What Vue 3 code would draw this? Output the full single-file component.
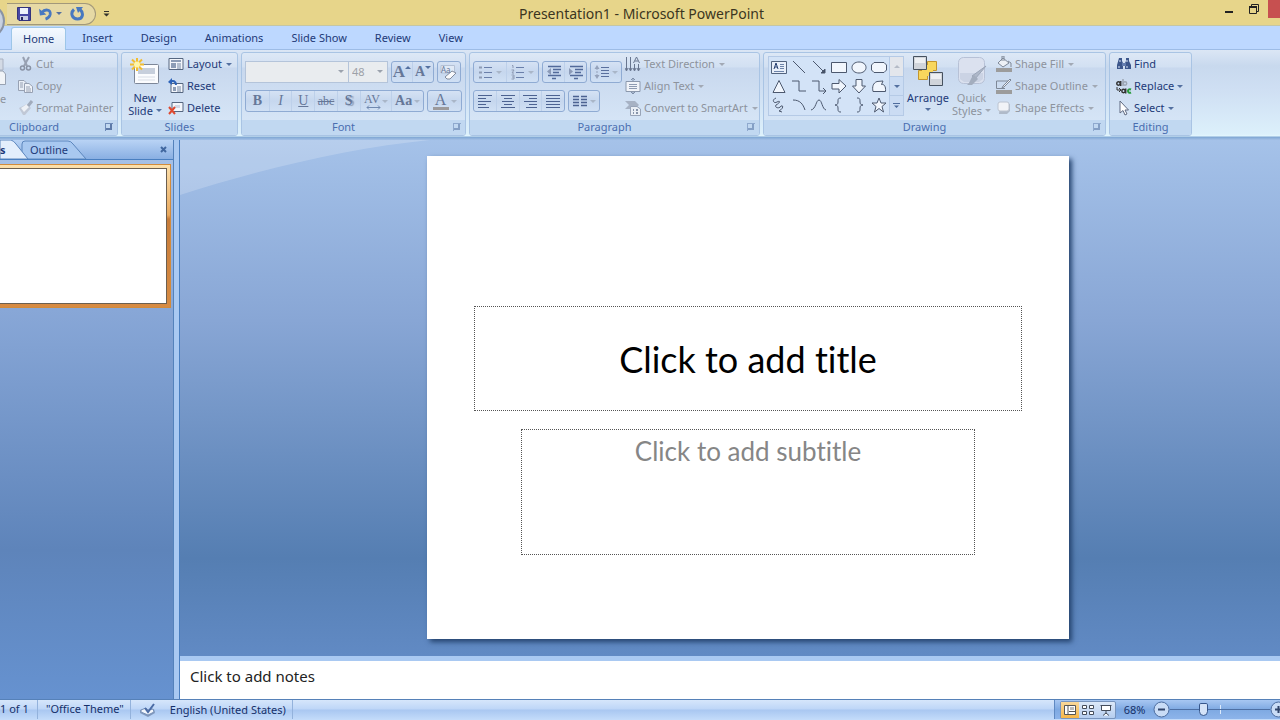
<script setup>
import { ref } from 'vue'

const tabs = ['Home', 'Insert', 'Design', 'Animations', 'Slide Show', 'Review', 'View']
const activeTab = ref('Home')
const zoom = ref(32)

const shapes = [
  { name: 'Line', d: 'M2 2L14 14' },
  { name: 'Arrow', d: 'M2 2L14 14M14 10V14H10Z', solid: true },
  { name: 'Rectangle', d: 'M.5 3.5H15.5V13.5H.5Z', fill: true },
  { name: 'Oval', d: 'M8 3C12 3 15 5.2 15 8.5S12 14 8 14S1 11.8 1 8.5S4 3 8 3Z', fill: true },
  { name: 'Rounded rectangle', d: 'M3 3.5H13L15.500 6V11L13 13.500H3L.5 11V6Z', fill: true },
  { name: 'Triangle', d: 'M8 2.500L14 14.500H2Z', fill: true },
  { name: 'Elbow connector', d: 'M1 3H8V13H15' },
  { name: 'Elbow arrow connector', d: 'M1 3H8V13H15M12 10L15 13L12 16', },
  { name: 'Right arrow', d: 'M1 5.500H8V1.500L15 8L8 15V11H1Z', fill: true },
  { name: 'Down arrow', d: 'M5 1.500H11V8H14.500L8 15L1.500 8H5Z', fill: true },
  { name: 'Freeform', d: 'M2 13.500C1 9 2 5 6 3.500L12 3L10.500 6.500C13 6 15 8 14.500 13.500Z', fill: true },
  { name: 'Scribble', d: 'M5 1C0 3 3 7 6 5C10 3 9 6 5 8C3 11 9 12 10 9C13 8 12 12 8 14L11 15' },
  { name: 'Arc', d: 'M2 3C9 3 12 7 14 13' },
  { name: 'Curve', d: 'M0 13C5 12 5 3 8 3S11 12 15 13' },
  { name: 'Left brace', d: 'M10 1C7 1 7 2 7 5C7 7 6 8 4 8C6 8 7 9 7 11C7 14 7 15 10 15' },
  { name: 'Right brace', d: 'M6 1C9 1 9 2 9 5C9 7 10 8 12 8C10 8 9 9 9 11C9 14 9 15 6 15' },
  { name: 'Star', d: 'M8 1L10 6H15L11 9.500L12.500 15L8 11.500L3.500 15L5 9.500L1 6H6Z', fill: true },
]

const alignments = [
  { name: 'Align left', d: 'M1 2H15M1 5H9M1 8H14M1 11H9M1 14H12' },
  { name: 'Center', d: 'M1 2H15M4 5H12M2 8H14M4 11H12M1 14H15' },
  { name: 'Align right', d: 'M1 2H15M7 5H15M2 8H15M7 11H15M4 14H15' },
  { name: 'Justify', d: 'M1 2H15M1 5H15M1 8H15M1 11H15M1 14H15' },
]
</script>

<template>
  <div class="window">
    <header class="titlebar">
      <button class="orb" aria-label="Office menu"></button>
      <div class="quick">
        <div class="pill">
          <button aria-label="Save">
            <svg width="14" height="14" viewBox="0 0 14 14"><path d="M.5.5H13.500V13.500H2L.5 12Z" fill="#4747a5" stroke="#33337c" /><path d="M3 1H11V7H3Z" fill="#eef2fb" /><path d="M3 9H11V13H3Z" fill="#c9cde4" /><path d="M4 10H6V13H4Z" fill="#252560" /></svg>
          </button>
          <button class="undo" aria-label="Undo">
            <svg width="14" height="14" viewBox="0 0 15 15"><path d="M3 6C6 2 13 2 12 8C11.500 10 10 12 7 13" fill="none" stroke="#4878c0" stroke-width="3" /><path d="M0 2L1 9L8 8Z" fill="#4878c0" /></svg>
            <i class="caret"></i>
          </button>
          <button aria-label="Redo">
            <svg width="15" height="15" viewBox="0 0 15 15"><path d="M4 3.500C0 7 2 13 7.500 13S14 7 10 3.500" fill="none" stroke="#4878c0" stroke-width="3" /><path d="M6 1H13L8 7Z" fill="#4878c0" /></svg>
          </button>
        </div>
        <button class="custom" aria-label="Customize Quick Access Toolbar">
          <svg width="7" height="6" viewBox="0 0 7 6"><path d="M1 0H6V1H1ZM.5 2.500H6.500L3.500 5.500Z" fill="#33322c" /></svg>
        </button>
      </div>
      <h1>Presentation1 - Microsoft PowerPoint</h1>
      <div class="winbtns">
        <button aria-label="Minimize"><svg width="8" height="12" viewBox="0 0 8 12"><path d="M0 9H8V11H0Z" fill="#222" /></svg></button>
        <button aria-label="Restore"><svg width="10" height="10" viewBox="0 0 10 10"><path d="M.5 3H7.500V9.500H.5ZM2.500 2.500V.5H9.500V7.500H8" fill="none" stroke="#222" /><path d="M0 2H8V4H0Z" fill="#222" /></svg></button>
        <button class="close" aria-label="Close"></button>
      </div>
    </header>

    <nav class="tabs">
      <button v-for="t in tabs" :key="t" :class="{ active: t === activeTab }" @click="activeTab = t">{{ t }}</button>
    </nav>

    <div class="ribbon">
      <section class="group clipboard">
        <div class="body">
          <button class="paste off" aria-label="Paste">
            <svg width="6" height="28" viewBox="0 0 6 28"><path d="M0 1H3V12H0" fill="#d3dae5" stroke="#a9b2c2" /><path d="M0 13H3L5.500 16V26.500H0" fill="#f1f4f8" stroke="#98a2b2" /></svg>
            <span>e</span>
          </button>
          <div class="col">
            <button class="off"><svg width="16" height="16" viewBox="0 0 16 16"><path d="M5 1L9 10M11 1L6 10" stroke="#98a1b2" stroke-width="2" /><circle cx="4.500" cy="12" r="2" fill="none" stroke="#8992a4" stroke-width="1.500" /><circle cx="10.500" cy="12" r="2" fill="none" stroke="#8992a4" stroke-width="1.500" /></svg>Cut</button>
            <button class="off"><svg width="16" height="16" viewBox="0 0 16 16"><path d="M.5 2.500H6L8.500 5V12.500H.5Z" fill="#e9eef6" stroke="#97a1b3" /><path d="M6.500 5.500H11L14.500 8.500V14.500H6.500Z" fill="#f0f3f9" stroke="#97a1b3" /><path d="M2 5H5M2 7H5M2 9H5M8 9H12M8 11H13M8 13H13" stroke="#97a1b3" /></svg>Copy</button>
            <button class="off"><svg width="16" height="16" viewBox="0 0 16 16"><path d="M1 8L9 4L13 8L7 15L5 15Z" fill="#c0c8d6" /><path d="M3 8L9 4L11 7L6 12Z" fill="#eef1f6" /><path d="M10 6L14 1" stroke="#a1abbc" stroke-width="3" /></svg>Format Painter</button>
          </div>
        </div>
        <footer>Clipboard<button class="launch" aria-label="Clipboard options"></button></footer>
      </section>

      <section class="group slides">
        <div class="body">
          <button class="big newslide">
            <svg width="30" height="28" viewBox="0 0 30 28"><rect x="4.500" y="6.500" width="24" height="19" rx="1" fill="#fbfcfe" stroke="#7d8798" /><path d="M8 10H25V16H8Z" fill="#c7cfdc" /><path d="M8 19H25M8 22H25" stroke="#d8dde6" /><path d="M7 0V13M0 6.500H14M2 1.500L12 11.500M12 1.500L2 11.500" stroke="#f1bd31" stroke-width="2" /><circle cx="7" cy="6.500" r="3" fill="#fff5a7" /></svg>
            <span>New</span><span>Slide<i class="caret"></i></span>
          </button>
          <div class="col">
            <button><svg width="16" height="16" viewBox="0 0 16 16"><path d="M1 2.500H15V13.500H1Z" fill="#f3f6fb" stroke="#566780" /><path d="M3 4H13V6H3ZM3 7H8V12H3Z" fill="#8d9db6" /><path d="M9 8H13M9 10H13M9 12H13" stroke="#7488a4" /></svg>Layout<i class="caret"></i></button>
            <button><svg width="16" height="16" viewBox="0 0 16 16"><path d="M3 5.500H15V14.500H3Z" fill="#f3f6fb" stroke="#566780" /><path d="M5 9H8V13H5Z" fill="#8d9db6" /><path d="M9 9H13M9 11H13M9 13H13" stroke="#7488a4" /><path d="M2 4C5 2 8 3 8 7" stroke="#2c62b8" stroke-width="2" fill="none" /><path d="M0 4L4 0V7Z" fill="#2c62b8" /></svg>Reset</button>
            <button><svg width="16" height="16" viewBox="0 0 16 16"><path d="M4 2.500H15V11.500H4Z" fill="#f3f6fb" stroke="#566780" /><path d="M7 5H12V8H7Z" fill="#cfd8e6" /><path d="M1 7L7 14M7 7L1 14" stroke="#df4930" stroke-width="2" /></svg>Delete</button>
          </div>
        </div>
        <footer>Slides</footer>
      </section>

      <section class="group font">
        <div class="body rows">
          <div class="row">
            <div class="combo">
              <label class="family"><select aria-label="Font" disabled><option></option></select><i class="caret"></i></label>
              <label class="size"><select aria-label="Font size" disabled><option>48</option></select><i class="caret"></i></label>
            </div>
            <div class="set two">
              <button class="glyph grow" aria-label="Grow font">A<i class="up"></i></button>
              <button class="glyph shrink" aria-label="Shrink font">A<i class="caret"></i></button>
            </div>
            <div class="set one">
              <button class="clear" aria-label="Clear formatting"><span>Aa</span><svg width="18" height="18" viewBox="0 0 18 18"><path d="M1 2.500H14.500V10H1Z" fill="#eef3fa" fill-opacity=".6" stroke="#b4c1d5" /><path d="M5 14L12 8L16 10L10 16H7Z" fill="#f9fafc" stroke="#818b9d" /></svg></button>
            </div>
          </div>
          <div class="row">
            <div class="set styles">
              <button class="glyph"><b>B</b></button>
              <button class="glyph"><em>I</em></button>
              <button class="glyph"><u>U</u></button>
              <button class="glyph abc"><s>abc</s></button>
              <button class="glyph shadow"><b>S</b></button>
              <button class="glyph av" aria-label="Character spacing"><span>AV</span><svg width="15" height="5" viewBox="0 0 15 5"><path d="M1 2.500H14M3 .5L1 2.500L3 4.500M12 .5L14 2.500L12 4.500" fill="none" stroke="#7089b0" /></svg><i class="caret"></i></button>
              <button class="glyph aa">Aa<i class="caret"></i></button>
            </div>
            <div class="set color">
              <button class="glyph fc" aria-label="Font color"><span>A</span><i class="caret"></i></button>
            </div>
          </div>
        </div>
        <footer>Font<button class="launch off" aria-label="Font options"></button></footer>
      </section>

      <section class="group paragraph">
        <div class="body">
          <div class="rows">
            <div class="row">
              <div class="set lists">
                <button aria-label="Bullets"><svg width="16" height="16" viewBox="0 0 16 16"><path d="M6 3.500H14M6 8.500H14M6 13.500H14" stroke="#6a7faa" /><path d="M1 3.500H4M1 8.500H4M1 13.500H4" stroke="#8e9bb4" stroke-width="2" /></svg><i class="caret"></i></button>
                <button aria-label="Numbering"><svg width="16" height="16" viewBox="0 0 16 16"><path d="M6 3.500H14M6 8.500H14M6 13.500H14" stroke="#6a7faa" /><path d="M2 1.500H3V4M1.500 6H4L2 9H4M1.500 11H4V15H1.500M2 13H4" stroke="#8e9bb4" fill="none" /></svg><i class="caret"></i></button>
              </div>
              <div class="set indent">
                <button aria-label="Decrease indent"><svg width="16" height="16" viewBox="0 0 16 16"><path d="M2 2.500H15M7 5.500H15M7 8.500H13M2 11.500H15M6 14.500H10" stroke="#526a9a" stroke-width="1.500" /><path d="M5 4V11L1 7.500Z" fill="#8b9ab7" /></svg></button>
                <button aria-label="Increase indent"><svg width="16" height="16" viewBox="0 0 16 16"><path d="M2 2.500H15M7 5.500H15M7 8.500H13M2 11.500H15M6 14.500H10" stroke="#526a9a" stroke-width="1.500" /><path d="M1 4V11L5 7.500Z" fill="#8b9ab7" /></svg></button>
              </div>
              <div class="set spacing">
                <button aria-label="Line spacing"><svg width="16" height="16" viewBox="0 0 16 16"><path d="M7 3.500H15M7 6.500H15M7 9.500H15M7 12.500H15" stroke="#5a709e" /><path d="M3 1L5.500 5H.5ZM3 15L5.500 11H.5Z" fill="#95a2bb" /><path d="M3 4V12" stroke="#95a2bb" stroke-dasharray="2 1" /></svg><i class="caret"></i></button>
              </div>
            </div>
            <div class="row">
              <div class="set aligns">
                <button v-for="a in alignments" :key="a.name" :aria-label="a.name"><svg width="16" height="16" viewBox="0 0 16 16"><path :d="a.d" stroke="#4c6291" transform="translate(0 .5)" /></svg></button>
              </div>
              <div class="set columns">
                <button aria-label="Columns"><svg width="16" height="16" viewBox="0 0 16 16"><path d="M1 3.500H7M1 6.500H7M1 9.500H7M1 12.500H7M9 3.500H15M9 6.500H15M9 9.500H15M9 12.500H15" stroke="#4c6291" stroke-width="1.500" /></svg><i class="caret"></i></button>
              </div>
            </div>
          </div>
          <div class="col">
            <button class="off"><svg width="16" height="16" viewBox="0 0 16 16"><path d="M1.500 1V14M5.500 1V14M9.500 8V14M13.500 8V14M0 12L1.500 15L3 12M4 12L5.500 15L7 12M8 12L9.500 15L11 12M12 12L13.500 15L15 12" stroke="#68768f" fill="none" /><path d="M8.500 7L11.500 1L14.500 7M10 5H13" stroke="#68768f" fill="none" /></svg>Text Direction<i class="caret"></i></button>
            <button class="off"><svg width="16" height="16" viewBox="0 0 16 16"><path d="M1 3.500H15V13.500H1Z" fill="#f1f4f9" stroke="#8b98ad" /><path d="M4 6.500H12M4 8.500H12M4 10.500H12" stroke="#8e9bb2" /><path d="M8 0V3M8 14V16M6 2L8 0L10 2M6 14L8 16L10 14" fill="none" stroke="#7f8fa9" /></svg>Align Text<i class="caret"></i></button>
            <button class="off"><svg width="16" height="16" viewBox="0 0 16 16"><path d="M0 1H10L14 5L10 9H0L4 5Z" fill="#a7b2c4" /><path d="M5.500 6.500H12L15.500 9V15.500H5.500Z" fill="#e9eef5" stroke="#98a4b8" /><path d="M8 10H9M11 10H13M8 13H9M11 13H13" stroke="#8794aa" stroke-width="2" /></svg>Convert to SmartArt<i class="caret"></i></button>
          </div>
        </div>
        <footer>Paragraph<button class="launch off" aria-label="Paragraph options"></button></footer>
      </section>

      <section class="group drawing">
        <div class="body">
          <div class="gallery">
            <div class="shapes">
              <button aria-label="Text box"><svg width="16" height="16" viewBox="0 0 16 16"><path d="M.5 2.500H15.500V14.500H.5Z" fill="#e8effa" stroke="#53647f" /><path d="M3 10L5 4L7 10M4 8H6" fill="none" stroke="#243e70" /><path d="M9 5.500H13M9 7.500H13M9 9.500H13M3 12.500H13" stroke="#6d84aa" /></svg></button>
              <button v-for="s in shapes" :key="s.name" :aria-label="s.name"><svg width="16" height="16" viewBox="0 0 16 16"><path :d="s.d" :fill="s.fill ? '#f1f6fd' : s.solid ? '#37445b' : 'none'" stroke="#4c586e" /></svg></button>
            </div>
            <div class="scroller">
              <button class="dim" aria-label="Previous row"><i class="up"></i></button>
              <button aria-label="Next row"><i class="caret"></i></button>
              <button aria-label="More shapes"><svg width="7" height="6" viewBox="0 0 7 6"><path d="M0 0H7V1H0ZM1 2.500H6L3.500 5Z" fill="#4f6c9d" /></svg></button>
            </div>
          </div>
          <button class="big arrange">
            <svg width="30" height="30" viewBox="0 0 30 30"><path d="M14.500 5.500H23.500V14.500H14.500ZM5.500 14.500H14.500V23.500H5.500Z" fill="#f8d75d" stroke="#c4962d" /><path d="M9 9H20V20H9Z" fill="#f8d75d" /><path d="M.5.5H13.500V13.500H.5ZM16.500 16.500H29.500V29.500H16.500Z" fill="#d0d4da" stroke="#46515f" /><path d="M2 2H12V7H2ZM18 18H28V23H18Z" fill="#edeff2" /></svg>
            <span>Arrange</span><i class="caret"></i>
          </button>
          <button class="big quickstyles off">
            <svg width="30" height="30" viewBox="0 0 30 30"><rect x="1.500" y="1.500" width="26" height="26" rx="5" fill="#dbe1ef" stroke="#b7c1d6" /><path d="M3 17H26V23L22 26H7L3 23Z" fill="#cbd3e4" /><path d="M29 10L18 23L15 20Z" fill="#afb8c9" stroke="#9ba6b9" /><path d="M17 19L21 23L15 29H10C14 26 13 22 17 19Z" fill="#a3adbe" /></svg>
            <span>Quick</span><span>Styles<i class="caret"></i></span>
          </button>
          <div class="col">
            <button class="off"><svg width="16" height="16" viewBox="0 0 16 16"><path d="M2 7L7 2L13 7L7 11Z" fill="#eef1f6" stroke="#7e8897" /><path d="M6 5V0H8V5M12 5L15 7V11" fill="none" stroke="#7e8897" /><path d="M0 12H16V16H0Z" fill="#9c9c9c" /></svg>Shape Fill<i class="caret"></i></button>
            <button class="off"><svg width="16" height="16" viewBox="0 0 16 16"><path d="M13 3H.5V10.500H9" fill="none" stroke="#7e8897" /><path d="M15 2L8 9L6 10L7 8L14 1Z" fill="#eef1f6" stroke="#7e8897" /><path d="M0 12H16V16H0Z" fill="#9c9c9c" /></svg>Shape Outline<i class="caret"></i></button>
            <button class="off"><svg width="16" height="16" viewBox="0 0 16 16"><path d="M4 5L14 4V11L11 14H3Z" fill="#b0bac9" /><rect x="2" y="2" width="11" height="9" rx="2" fill="#f1f3f7" stroke="#bcc4d1" /></svg>Shape Effects<i class="caret"></i></button>
          </div>
        </div>
        <footer>Drawing<button class="launch off" aria-label="Drawing options"></button></footer>
      </section>

      <section class="group editing">
        <div class="body">
          <div class="col">
            <button><svg width="16" height="16" viewBox="0 0 16 16"><path d="M3 2H6V5L7 7V13H1V9ZM10 2H13V5L15 9V13H9V7L10 5Z" fill="#3c568b" /><path d="M6 7H10V10H6Z" fill="#647daf" /><path d="M3 10V12M11 10V12M4 4V6M11 4V6" stroke="#dce7f8" /></svg>Find</button>
            <button><svg width="16" height="16" viewBox="0 0 16 16" fill="none" stroke-width="1.500"><circle cx="2.500" cy="5.500" r="1.700" stroke="#333" /><path d="M4.700 3V8M6.500 11.500" stroke="#333" /><path d="M7 1V8" stroke="#9ca6b3" /><circle cx="9" cy="5.500" r="1.700" stroke="#9ca6b3" /><circle cx="7.500" cy="13" r="1.700" stroke="#333" /><path d="M9.700 10.500V15.500" stroke="#333" /><path d="M15 11.500C13 10.500 12 12 12 13S13 15.500 15 14.500" stroke="#269b3a" stroke-width="2" /><path d="M1 9V12H4M3 10L5 12L3 14" stroke="#333" stroke-width="1" /></svg>Replace<i class="caret"></i></button>
            <button><svg width="16" height="16" viewBox="0 0 16 16"><path d="M4 1V13L7 10.500L9 15L11 14L9 10H12.500Z" fill="#fff" stroke="#5e6980" /></svg>Select<i class="caret"></i></button>
          </div>
        </div>
        <footer>Editing</footer>
      </section>
    </div>

    <main class="work">
      <aside class="pane">
        <div class="panetabs">
          <svg class="tabshape" width="90" height="19" viewBox="0 0 90 19"><path d="M22 19V4Q22 1 25 1H68Q71 1 73 4L86 19Z" fill="#a8c8f0" stroke="#5c86bd" /><path d="M0 0H11Q14 1 16 4L28 19H0Z" fill="#e3eefc" stroke="#5c86bd" /></svg>
          <button class="tslides"><b>s</b></button>
          <button class="toutline">Outline</button>
          <button class="x" aria-label="Close pane"><svg width="7" height="7" viewBox="0 0 7 7"><path d="M1 1L6 6M6 1L1 6" stroke="#41679f" stroke-width="2" /></svg></button>
        </div>
        <div class="thumb"><div class="mini"></div></div>
      </aside>
      <div class="editor">
        <div class="canvas">
          <svg class="swoosh" width="250" height="56" viewBox="0 0 250 56"><path d="M0 0H250C170 8 85 28 0 55Z" fill="#fff" fill-opacity=".2" /></svg>
          <article class="slide">
            <div class="ph title">Click to add title</div>
            <div class="ph subtitle">Click to add subtitle</div>
          </article>
        </div>
        <div class="notes">Click to add notes</div>
      </div>
    </main>

    <footer class="status">
      <span class="cell count">1 of 1</span>
      <span class="cell theme">"Office Theme"</span>
      <button class="spell" aria-label="Spelling"><svg width="18" height="16" viewBox="0 0 18 16"><path d="M1 8L7 6L9 8L15 7L16 11L9 15L1 11Z" fill="#8199bd" /><path d="M2 8L7 6L9 8L14 7L15 10L9 13L2 10Z" fill="#f2f6fc" stroke="#7690b8" /><path d="M6 6L9 10L15 2" fill="none" stroke="#4a6ba5" stroke-width="2" /></svg></button>
      <button class="cell lang">English (United States)</button>
      <div class="right">
        <div class="views">
          <button class="on" aria-label="Normal view"><svg width="12" height="12" viewBox="0 0 12 12"><path d="M.5 1.500H11.500V10.500H.5Z" fill="#fff" stroke="#555" /><path d="M4 1V10M5 7.500H11" stroke="#555" /><path d="M6 3H10V6H6Z" fill="#bbb" /></svg></button>
          <button aria-label="Slide sorter"><svg width="12" height="12" viewBox="0 0 12 12"><path d="M.5 1.500H4.500V4.500H.5ZM7.500 1.500H11.500V4.500H7.500ZM.5 7.500H4.500V10.500H.5ZM7.500 7.500H11.500V10.500H7.500Z" fill="#fff" stroke="#444d5b" /></svg></button>
          <button aria-label="Slide show"><svg width="12" height="12" viewBox="0 0 12 12"><path d="M.5 1.500H11.500M1.500 2V6.500H10.500V2M6 7V10M3 11.500L6 9L9 11.500" fill="#fff" stroke="#444d5b" /></svg></button>
        </div>
        <span class="pct">68%</span>
        <button class="round" aria-label="Zoom out"><svg width="17" height="17" viewBox="0 0 17 17"><circle cx="8.500" cy="8.500" r="7.500" fill="#c9dcf6" stroke="#4d6d9f" /><path d="M5 8.500H12" stroke="#31456b" stroke-width="2" /></svg></button>
        <span class="slider"><input v-model="zoom" type="range" min="0" max="100" aria-label="Zoom" /></span>
        <button class="round" aria-label="Zoom in"><svg width="17" height="17" viewBox="0 0 17 17"><circle cx="8.500" cy="8.500" r="7.500" fill="#c9dcf6" stroke="#4d6d9f" /><path d="M5 8.500H12M8.500 5V12" stroke="#31456b" stroke-width="2" /></svg></button>
      </div>
    </footer>
  </div>
</template>

<style>
html, body { margin: 0; }
</style>

<style scoped>
* { box-sizing: border-box; }
.window { display: flex; flex-direction: column; height: 100vh; overflow: hidden; background: #bdd8ff; font: 11px/14px "Noto Sans", sans-serif; color: #1e3a78; }
button { display: flex; align-items: center; justify-content: center; margin: 0; padding: 0; border: 0; background: none; font: inherit; color: inherit; white-space: nowrap; }
svg { display: block; flex: none; }
.caret, .up { flex: none; width: 0; height: 0; border: 3px solid transparent; border-bottom: 0; border-top-color: #5470a0; }
.up { border: 3px solid transparent; border-top: 0; border-bottom-color: #5470a0; }
.off { color: #8d939d; }
.off .caret { border-top-color: #a2a9b5; }

.titlebar { position: relative; display: grid; grid-template-columns: 1fr auto 1fr; flex: none; height: 26px; background: #e7d58a; border-bottom: 1px solid #c5c6a4; }
.titlebar h1 { margin: 0; padding-left: 3px; font-size: 14px; line-height: 27px; font-weight: 400; color: #3b3521; }
.orb { position: absolute; left: -27px; top: 4px; z-index: 2; width: 32px; height: 34px; border: 2px solid #8993a5; border-radius: 50%; background: radial-gradient(#e8edf5, #b3bfd3); }
.quick { display: flex; align-items: center; padding-left: 7px; }
.pill { display: flex; align-items: center; gap: 8px; width: 89px; height: 22px; padding: 0 8px 0 10px; border: 1px solid #a2987a; border-left: 0; border-radius: 0 11px 11px 0; background: #e6d9a5; }
.undo { gap: 3px; }
.custom { margin-left: 7px; }
.winbtns { display: flex; justify-content: flex-end; align-items: flex-start; gap: 16px; }
.winbtns button { padding-top: 4px; }
.winbtns button:first-child { padding-top: 2px; }
.winbtns .close { margin-left: -7px; width: 12px; height: 18px; padding: 0; background: #c75050; }

.tabs { display: flex; gap: 4px; flex: none; height: 24px; padding: 1px 0 0 11px; background: #bdd8ff; border-bottom: 1px solid #9dbce6; }
.tabs button { height: 24px; padding: 0 11px 2px; border: 1px solid transparent; border-radius: 3px 3px 0 0; }
.tabs .active { background: linear-gradient(#f4f9ff, #dce8f6); border-color: #9dc6e8; border-bottom: 0; }

.ribbon { display: flex; gap: 3px; flex: none; height: 90px; padding: 2px 0 4px; background: linear-gradient(#dbe6f5 0, #c8d9ee 16px, #cfdff3 40px, #dcf0fb 84px, #e3f6fd 86px, #7ea6d3 87px, #a4c0e6 90px); }
.group { display: flex; flex: none; flex-direction: column; border: 1px solid #a9c4e4; border-radius: 3px; background: linear-gradient(#dde8f6 0, #d2e0f2 14px, #c8d8ee 15px, #d9e8f8 100%); overflow: hidden; }
.group footer { position: relative; display: flex; justify-content: center; flex: none; height: 15px; line-height: 13px; background: #c1d8f1; color: #4a6eb0; }
.launch { position: absolute; right: 4px; top: 3px; width: 8px; height: 8px; border-left: 1px solid #6e8bb8; border-top: 1px solid #6e8bb8; }
.launch::after { content: ""; position: absolute; right: 1px; bottom: 1px; width: 4px; height: 4px; border-right: 2px solid #5d7aa8; border-bottom: 2px solid #5d7aa8; }
.launch.off { opacity: .6; }
.body { display: flex; flex: 1; }
.col { display: flex; flex-direction: column; align-items: flex-start; }
.col button { height: 22px; gap: 3px; }
.col .caret { margin-left: 1px; }
.big { flex-direction: column; justify-content: flex-start; line-height: 13px; padding-top: 3px; }
.big span { display: flex; align-items: center; gap: 3px; }

.clipboard { width: 118px; border-left: 0; border-radius: 0 3px 3px 0; }
.clipboard footer { padding-right: 49px; }
.font footer, .paragraph footer, .drawing footer { padding-right: 20px; }
.paste { flex-direction: column; align-items: flex-start; justify-content: flex-start; width: 18px; padding-top: 5px; gap: 6px; }
.clipboard .col button { gap: 2px; }
.slides { width: 117px; }
.newslide { width: 46px; padding-top: 5px; gap: 0; }
.newslide svg { margin-bottom: 5px; }

.rows { display: flex; flex-direction: column; gap: 7px; padding: 8px 3px 0; }
.row { display: flex; gap: 3px; }
.set { display: flex; flex: none; height: 22px; border: 1px solid #8fabd3; border-radius: 3px; background: linear-gradient(#d5e2f4, #c6d7ee 50%, #d0e0f4); color: #667798; }
.set button { flex: 1; border-left: 1px solid #bdd0ea; gap: 2px; }
.set button:first-child { border-left: 0; }
.set .caret { border-top-color: #a9b6c8; }
.set .glyph { position: relative; font: 14px/18px "Liberation Serif", serif; font-weight: 700; }
.combo { display: flex; }
.combo label { position: relative; display: flex; align-items: center; height: 22px; border: 1px solid #b4c4da; background: #e9ecef; }
.combo .family { width: 104px; }
.combo .size { width: 39px; border-left: 0; }
.combo select { width: 100%; height: 20px; padding: 0 0 0 3px; border: 0; background: none; appearance: none; font: inherit; color: #9da1a8; opacity: 1; }
.combo .caret { position: absolute; right: 4px; top: 8px; border-top-color: #9ba2ad; }
.font { width: 225px; }
.two { width: 43px; }
.one { width: 24px; }
.set .grow { font-size: 17px; }
.grow .up, .shrink .caret { align-self: flex-start; margin-top: 4px; }
.shrink .caret { border-top-color: #5470a0; }
.set .grow, .set .shrink { gap: 0; }
.clear { position: relative; }
.clear span { position: absolute; left: 3px; top: 2px; font-size: 8px; line-height: 11px; }
.styles { width: 179px; }
.styles button { flex: 1 1 22px; }
.styles .av, .styles .aa { flex-basis: 31px; }
.styles em { font-weight: 400; }
.styles u { font-weight: 400; }
.set .abc { font-size: 12px; font-weight: 400; }
.shadow b { text-shadow: 2px 1px 1px #8d9dba; }
.av span { font-size: 12px; font-weight: 400; line-height: 12px; padding-bottom: 5px; }
.av svg { position: absolute; left: 5px; bottom: 1px; }
.color { width: 35px; }
.fc span { width: 16px; border-bottom: 3px solid #9c9a9c; font-size: 16px; font-weight: 400; line-height: 14px; text-align: center; }

.paragraph { width: 291px; }
.paragraph .body { gap: 0; }
.lists { width: 66px; }
.indent { width: 45px; }
.spacing { width: 32px; }
.aligns { width: 92px; }
.columns { width: 32px; }

.drawing { width: 343px; }
.gallery { display: flex; flex: none; width: 136px; height: 60px; margin: 3px 0 0 4px; border: 1px solid #b5cae6; background: #d3e3f7; }
.shapes { display: grid; flex: 1; grid-template-columns: repeat(6, 1fr); }
.scroller { display: flex; flex-direction: column; width: 14px; border-left: 1px solid #b5cae6; }
.scroller button { flex: 1; border-top: 1px solid #b5cae6; background: #cbdcf3; }
.scroller button:first-child { border-top: 0; }
.scroller .dim { background: #e3e6ec; }
.dim .up { border-bottom-color: #b5bbc7; }
.arrange { width: 48px; }
.arrange svg, .quickstyles svg { margin-bottom: 5px; }
.arrange .caret { margin-top: 4px; }
.quickstyles { width: 39px; }
.drawing .col { padding-left: 5px; }

.editing { width: 83px; }
.editing .col { padding-left: 6px; }
.editing .col button { gap: 2px; }

.work { display: flex; flex: 1; min-height: 0; background: #a9c9f2; }
.pane { flex: none; width: 174px; background: linear-gradient(#a9c3e9 0, #88a7d7 170px, #5e84ba 410px, #6692d0 100%); border-right: 1px solid #5482bb; }
.panetabs { position: relative; display: flex; align-items: center; height: 20px; background: linear-gradient(#b9d3f5, #89afe2); border-bottom: 1px solid #4a7fc0; }
.tabshape { position: absolute; left: 0; bottom: 0; }
.panetabs button { position: relative; }
.tslides { width: 30px; justify-content: flex-start; }
.x { margin-left: auto; margin-right: 6px; }
.thumb { margin: 4px 2px 0 0; padding: 3px 3px 3px 0; height: 144px; border: 1px solid #d28b3b; border-left: 0; background: linear-gradient(#fce0ac, #e9a95e 50px, #c77c3a 54px, #d78b43); }
.mini { height: 100%; background: #fff; border: 1px solid #6c5f50; border-left: 0; }
.editor { display: flex; flex: 1; flex-direction: column; min-width: 0; margin-left: 5px; border-left: 1px solid #4a7fc0; }
.canvas { position: relative; display: flex; flex: 1; padding: 16px 211px 17px 247px; background: linear-gradient(#a5c2e9 0, #88a6d5 35%, #557eb2 81%, #618ac4 100%); }
.swoosh { position: absolute; left: 0; top: 0; }
.slide { display: flex; flex: 1; flex-direction: column; align-items: center; gap: 18px; padding-top: 150px; background: #fff; box-shadow: 3px 3px 5px #25446f; font-family: Lato, "Noto Sans", sans-serif; font-variant-ligatures: none; }
.ph { display: flex; justify-content: center; border: 1px dotted #555; }
.title { align-items: center; width: 85.5%; height: 105px; color: #000; font-size: 36px; line-height: 44px; }
.subtitle { width: 70.8%; height: 126px; padding-top: 3px; color: #868686; font-size: 26px; line-height: 36px; }
.notes { flex: none; height: 38px; margin-top: 5px; padding: 5px 10px; background: #fff; color: #222; font-size: 15px; line-height: 20px; }

.status { display: flex; align-items: stretch; flex: none; height: 21px; padding-bottom: 1px; background: linear-gradient(#d6e6fb, #bed6f7 45%, #a9c7f1 50%, #c4dcfa); border-top: 1px solid #5681b8; line-height: 18px; color: #15306a; overflow: hidden; }
.cell { padding-right: 6px; border-right: 1px solid #93b2dc; }
.count { width: 38px; }
.theme { padding-left: 8px; }
.spell { width: 34px; }
.lang { padding-left: 5px; }
.right { display: flex; align-items: center; margin: 0 -7px 0 auto; padding-left: 5px; border-left: 1px solid #5f89c2; background: linear-gradient(#a8c7f2, #7ea9e2 50%, #8db4ea); }
.views { display: flex; height: 18px; border: 1px solid #7894bd; border-radius: 2px; background: linear-gradient(#dce8f8, #b5cdef); }
.views button { width: 18px; }
.views .on { background: linear-gradient(#f9d89b, #f6b648); }
.pct { width: 37px; text-align: center; }
.slider { display: flex; width: 100px; }
.slider input { width: 100%; height: 15px; margin: 0; appearance: none; background: linear-gradient(#4d6fa4, #4d6fa4) center / 100% 1px no-repeat, linear-gradient(#dceafc, #dceafc) 51% center / 1px 9px no-repeat; }
.slider input::-webkit-slider-thumb { appearance: none; width: 9px; height: 13px; border: 1px solid #35568c; border-radius: 2px 2px 5px 5px; background: #d4e3f8; }
</style>
